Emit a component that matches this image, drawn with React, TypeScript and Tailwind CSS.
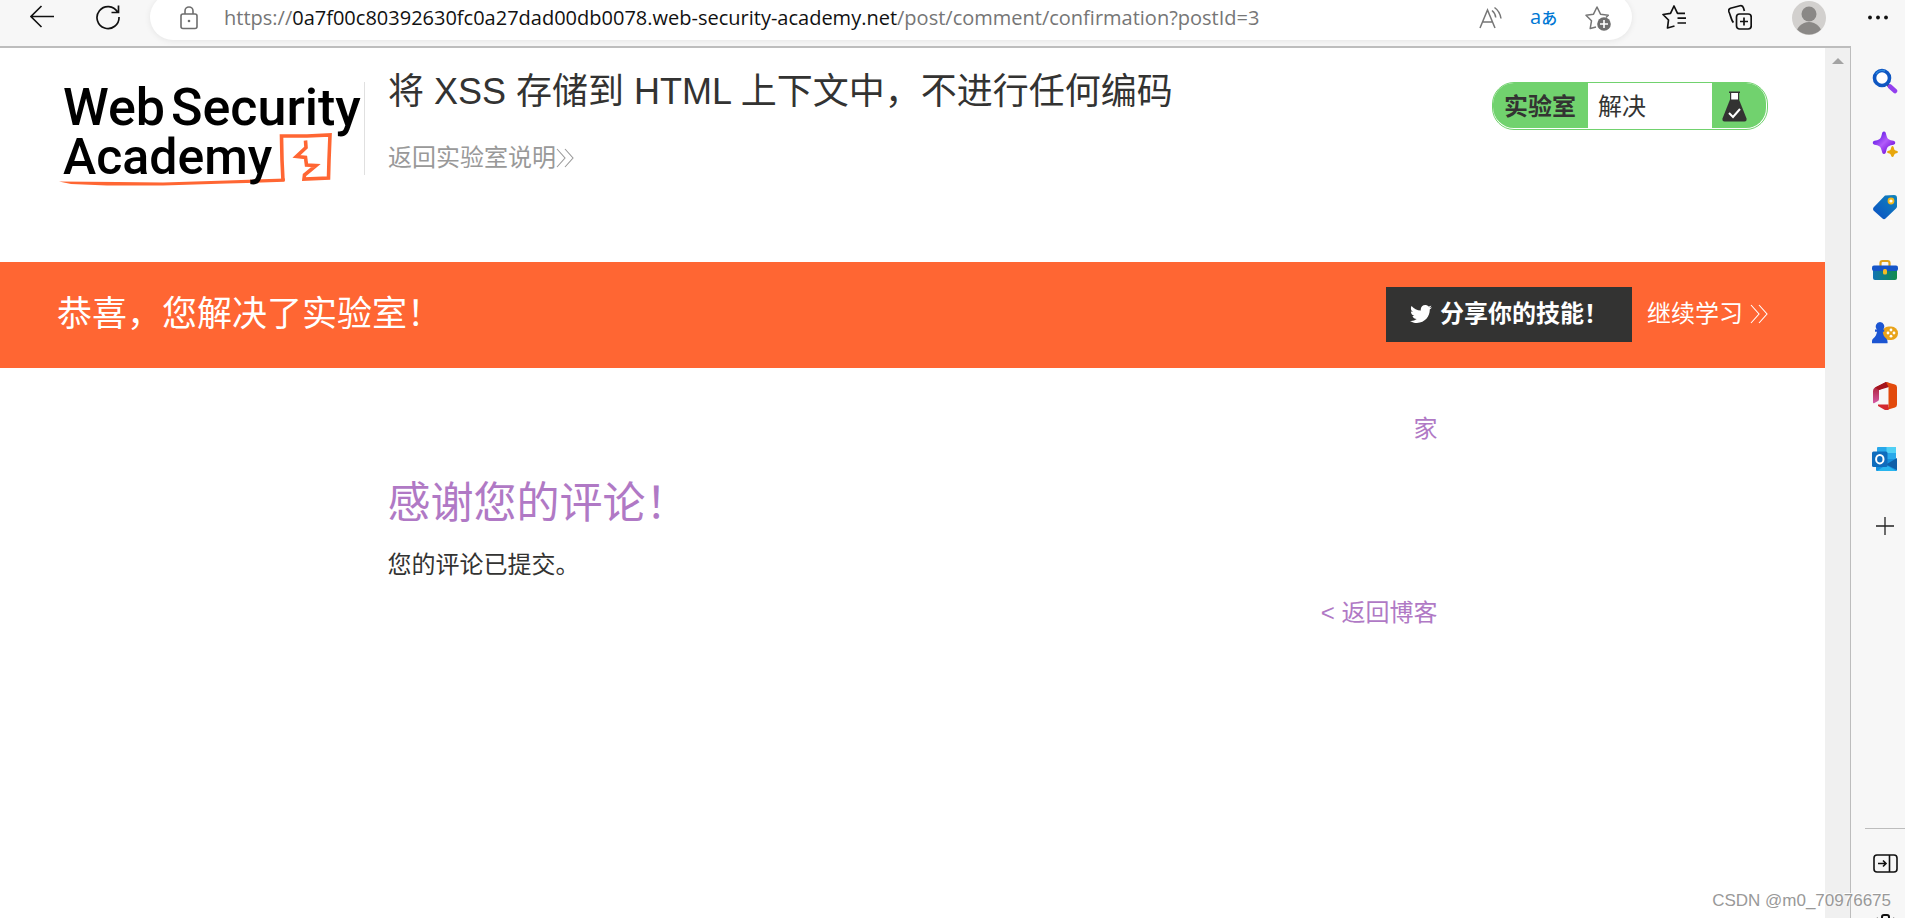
import React from 'react';
import { FaTwitter } from 'react-icons/fa';

const Toolbar = () => {
  return (
    <header className="flex h-[46px] shrink-0 items-start overflow-hidden bg-[#f7f7f7] pr-4 pl-[30px]">
      <button aria-label="后退" className="mt-1">
        <svg className="h-[26px] w-6" viewBox="0 0 24 26" fill="none" stroke="#111" strokeWidth="1.6">
          <path d="M24 12.5H1M11.5 2 1 12.5 11.5 23" />
        </svg>
      </button>
      <button aria-label="刷新" className="ml-[42px] mt-1">
        <svg className="h-[26px] w-6" viewBox="0 0 24 26" fill="none" stroke="#111" strokeWidth="1.7">
          <path d="M21.5 8A11 11 0 1 0 23 13M22.5 1.500V8.500H15.500" />
        </svg>
      </button>

      {/* Address bar */}
      <div className="-mt-1.5 ml-[30px] flex h-[46px] min-w-0 flex-1 items-center rounded-full bg-white pt-px pr-[21px] pl-[30px] shadow-[0_1px_6px_rgba(0,0,0,0.08)]">
        <svg className="h-6 w-[18px] shrink-0" viewBox="0 0 18 24" fill="none" stroke="#6e6e6e" strokeWidth="1.6">
          <rect x="1" y="8" width="16" height="14.500" rx="2" />
          <path d="M5 8V5a4 4 0 0 1 8 0v3" />
          <circle cx="9" cy="15" r="1.300" fill="#6e6e6e" stroke="none" />
        </svg>
        <div className="ml-[26px] min-w-0 flex-1 truncate font-['Open_Sans','Noto_Sans',sans-serif] text-[20px] leading-7 text-[#767676]">
          https://<span className="text-[#111]">0a7f00c80392630fc0a27dad00db0078.web-security-academy.net</span>/post/comment/confirmation?postId=3
        </div>
        <button aria-label="大声朗读">
          <svg className="h-[26px] w-6" viewBox="0 0 24 26" fill="none" stroke="#767676" strokeWidth="1.5">
            <path d="M1 23 8.500 5 16 23M3.700 17h9.600M13 5.500c2.200 1.800 3.500 4 3.700 7M15.500 2.500c3.800 2.700 5.800 6.200 6.500 11" />
          </svg>
        </button>
        <button aria-label="翻译" className="ml-[27px] w-[27px] whitespace-nowrap font-['Open_Sans','Noto_Sans_CJK_JP',sans-serif] leading-7 text-[#0078d4]">
          <span className="text-[20px]">a</span>
          <span className="text-[16px] font-medium">あ</span>
        </button>
        <button aria-label="添加到收藏夹" className="ml-7">
          <svg className="h-[26px] w-[26px]" viewBox="0 0 26 26" fill="none">
            <path
              d="M11 22 5.200 23.500 6.500 15.800 1 10.300 8.500 9.200 12 2l3.500 7.200 7.800 1.100-2.300 2.200"
              stroke="#767676"
              strokeWidth="1.5"
              strokeLinejoin="round"
            />
            <circle cx="19" cy="19" r="6.800" fill="#6e6e6e" />
            <path d="M19 15v8M15 19h8" stroke="#fff" strokeWidth="1.6" />
          </svg>
        </button>
      </div>

      <button aria-label="收藏夹" className="ml-[30px] mt-1">
        <svg className="h-[26px] w-6" viewBox="0 0 24 26" fill="none" stroke="#111" strokeWidth="1.7" strokeLinejoin="round">
          <path d="M12.500 22 5.500 24 6.500 16 1 10.500 8.500 9.400 12 2l3.500 7.400H23M15.500 14.200H24M15.500 19H24" />
        </svg>
      </button>
      <button aria-label="集锦" className="ml-[42px] mt-1">
        <svg className="h-[26px] w-6" viewBox="0 0 24 26" fill="none" stroke="#111" strokeWidth="1.7">
          <rect x="8.500" y="10" width="14.700" height="15" rx="3" />
          <path d="M16 13.500v8M12 17.500h8M5.500 18.500C3.500 17 2.800 12 1 8 .3 6 .9 4.800 2.500 4.200L12 1.700c2-.5 3 .5 3.500 2.200l.9 3" />
        </svg>
      </button>
      <button aria-label="个人资料" className="ml-10 mt-px">
        <svg className="h-[34px] w-[34px]" viewBox="0 0 34 34">
          <clipPath id="avatar">
            <circle cx="17" cy="17" r="16.500" />
          </clipPath>
          <circle cx="17" cy="17" r="17" fill="#d2d0ce" />
          <circle cx="17" cy="13" r="7.500" fill="#8a8886" />
          <circle cx="17" cy="34" r="13" fill="#8a8886" clipPath="url(#avatar)" />
        </svg>
      </button>
      <button aria-label="设置及其他" className="ml-[41px] mt-[5px]">
        <svg className="h-6 w-[22px]" viewBox="0 0 22 24" fill="#111">
          <circle cx="3" cy="12.500" r="1.900" />
          <circle cx="11" cy="12.500" r="1.900" />
          <circle cx="19" cy="12.500" r="1.900" />
        </svg>
      </button>
    </header>
  );
};

const AcademyLogo = () => (
  <svg
    className="h-[122px] w-[307px] shrink-0 font-['Roboto',sans-serif] font-medium"
    viewBox="0 -12 307 122"
    role="img"
    aria-label="Web Security Academy"
  >
    <path d="M2 101.500 60 102 106 102.500 170 100.500 228 98.500 227.500 101.800 170 103.500 106 105.500 50 105.500 14 104z" fill="#ff6633" />
    <path
      d="M226 101 225 80 224.500 56 250 56 273 55 272 80 271.500 98 247 99 247.500 95 259 85.500 249.500 85 248.500 77.500 239.500 76.500 249 67.500 248.500 60.500"
      fill="none"
      stroke="#ff6633"
      strokeWidth="3.6"
    />
    <g fill="#000">
      <text x="6" y="44.500" fontSize="52">Web</text>
      <text x="114" y="44.500" fontSize="52">Security</text>
      <text x="6" y="93.500" fontSize="50">Academy</text>
    </g>
  </svg>
);

const LabStatus = () => (
  <div className="mt-[14px] ml-auto flex h-12 w-[276px] shrink-0 rounded-[22px] border border-[#71d26e] pr-px pb-px text-[24px] leading-[47px] text-[#333332]">
    <span className="w-[95px] rounded-l-[21px] bg-[#71d26e] pl-[11px] font-bold">实验室</span>
    <span className="flex-1 pl-[10px]">解决</span>
    <span className="w-[54px] rounded-r-[20px] bg-[#71d26e] pt-2 pl-[9px]">
      <svg className="h-8 w-[26px]" viewBox="0 0 26 32">
        <path d="M9.500 2h8v7.500h-8z" fill="#fff" />
        <path d="M8 .5h11v1.600H8zM9 2h1.200v7H9zM17 2h1.200v7H17z" fill="#333332" />
        <path d="M9 8.500h9L25.500 27.500Q26 30.500 23.500 30.500H3.500Q1 30.500 1.500 27.500z" fill="#333332" />
        <path d="m8 22 4 4 7-8" fill="none" stroke="#fff" strokeWidth="2" />
      </svg>
    </span>
  </div>
);

const Chevrons = ({ className }: { className: string }) => (
  <svg className={className} viewBox="0 0 18 20" fill="none" stroke="currentColor" strokeWidth="1.1">
    <path d="m1 1 8 9-8 9M9 1l8 9-8 9" />
  </svg>
);

const Page = () => {
  return (
    <div className="min-w-0 flex-1 overflow-hidden bg-white text-[24px] leading-8 text-[#333332]">
      <div className="flex h-[214px] px-[57px] pt-5">
        <a href="#academy" className="shrink-0">
          <AcademyLogo />
        </a>
        <div className="mt-[14px] h-[93px] w-px shrink-0 bg-[#e0e0e0]" />
        <div className="ml-[23px]">
          <h2 className="text-[36px] leading-[48px]">将 XSS 存储到 HTML 上下文中，不进行任何编码</h2>
          <a href="#lab" className="mt-[26px] flex w-fit items-center text-[#999]">
            返回实验室说明
            <Chevrons className="h-5 w-[18px]" />
          </a>
        </div>
        <LabStatus />
      </div>

      {/* Solved banner */}
      <div className="flex h-[106px] items-center bg-[#ff6633] px-[57px] pb-0.5 text-white">
        <h4 className="text-[35px] leading-[44px]">恭喜，您解决了实验室！</h4>
        <button className="ml-auto flex h-[55px] w-[246px] items-center bg-[#333332] pl-6 font-bold">
          <FaTwitter className="mr-2 h-[22px] w-[22px]" />
          分享你的技能！
        </button>
        <a href="#continue" className="ml-[15px] flex items-center">
          继续学习
          <Chevrons className="ml-[7px] h-5 w-[18px]" />
        </a>
      </div>

      <main className="mx-auto max-w-[1050px] pt-[45px]">
        <div className="text-right">
          <a href="#home" className="text-[#b079c5]">家</a>
        </div>
        <h1 className="mt-7 text-[43px] leading-[60px] text-[#b079c5]">感谢您的评论！</h1>
        <p className="mt-4">您的评论已提交。</p>
        <div className="mt-4 text-right">
          <a href="#blog" className="text-[#b079c5]">&lt; 返回博客</a>
        </div>
      </main>
    </div>
  );
};

const SearchIcon = () => (
  <svg className="h-[26px] w-[26px]" viewBox="0 0 26 26" fill="none">
    <path d="m15.500 16.500 3 3" stroke="#555" strokeWidth="3" />
    <path d="m18 18.500 5 4.500" stroke="#9340ee" strokeWidth="4.500" strokeLinecap="round" />
    <circle cx="10" cy="10" r="7.500" fill="#fff" stroke="#0f57c2" strokeWidth="3.600" />
    <path d="M4 6a7.500 7.500 0 0 1 9-3" stroke="#2c8ae0" strokeWidth="1.500" />
  </svg>
);

const SparkleIcon = () => (
  <svg className="h-[26px] w-[26px]" viewBox="0 0 26 26">
    <defs>
      <linearGradient id="spark" x1="0" y1="0" x2="1" y2="1">
        <stop offset="0.2" stopColor="#6a22e8" />
        <stop offset="0.5" stopColor="#b25cfa" />
        <stop offset="0.8" stopColor="#7a1be0" />
      </linearGradient>
    </defs>
    <path d="M12 .5c1.500 0 1.800 1 2.200 3 .9 4 2 5.100 6 6 2 .4 3 .8 3 2.200s-1 1.800-3 2.200c-4 .9-5.100 2-6 6-.4 2-.8 3-2.200 3s-1.800-1-2.200-3c-.9-4-2-5.100-6-6-2-.4-3-.8-3-2.200s1-1.800 3-2.200c4-.9 5.100-2 6-6 .4-2 .8-3 2.200-3z" fill="url(#spark)" />
    <path d="M20.500 15c1.300 0 1.500 3.300 2.200 4 .6.600 3.300.8 3.300 2s-2.700 1.400-3.300 2c-.7.700-.9 3-2.200 3s-1.500-2.300-2.200-3c-.6-.6-3.300-.8-3.300-2s2.700-1.400 3.300-2c.7-.7.9-4 2.200-4z" fill="#e8a70c" />
  </svg>
);

const TagIcon = () => (
  <svg className="h-[26px] w-[26px]" viewBox="0 0 26 26">
    <defs>
      <linearGradient id="tag" x1="0" y1="1" x2="1" y2="0">
        <stop offset="0" stopColor="#0b4fc4" />
        <stop offset="1" stopColor="#1185bb" />
      </linearGradient>
    </defs>
    <path d="M13 1.500 22 1q3 0 3 3v8.500q0 1-1 2L13.500 24.500Q12 26 10.500 24.500L1.500 16.500Q.5 15 1.500 13.500z" fill="url(#tag)" />
    <circle cx="19" cy="7" r="2.500" fill="#fff" stroke="#f4b91b" strokeWidth="1.800" />
  </svg>
);

const ToolboxIcon = () => (
  <svg className="h-[26px] w-[26px]" viewBox="0 0 26 26">
    <defs>
      <linearGradient id="box" x1="0" y1="0" x2="1" y2="0">
        <stop offset="0" stopColor="#1173b5" />
        <stop offset="1" stopColor="#128c4b" />
      </linearGradient>
    </defs>
    <path d="M8.500 9V6q0-2 2-2h5q2 0 2 2v3" fill="none" stroke="#e0a21a" strokeWidth="2.200" />
    <path d="M1 11h24v10q0 2-2 2H3q-2 0-2-2z" fill="url(#box)" />
    <path d="M2 8.500h22q2 0 2 2V12q0 2-2 2H2q-2 0-2-2v-1.500q0-2 2-2z" fill="#1555c8" />
    <rect x="11" y="12" width="4" height="5.500" rx="1.500" fill="#f7bb24" />
  </svg>
);

const GamesIcon = () => (
  <svg className="h-[26px] w-[26px]" viewBox="0 0 26 26">
    <rect x="10" y="6.500" width="16" height="13.500" rx="6.700" fill="#e9a31a" />
    <g fill="#fff">
      <circle cx="19" cy="10" r="1.400" />
      <circle cx="16" cy="13" r="1.400" />
      <circle cx="22" cy="13" r="1.400" />
      <circle cx="19" cy="16.200" r="1.400" />
    </g>
    <path d="M8 2a4.500 4.500 0 0 1 3 7.600h1.200v2.200h-1.400c.2 3 1.200 5 3.200 6.500q2 1.400 1.500 5H0q-.5-3.600 1.500-5c2-1.500 3-3.500 3.500-6.500H3V9.600h2A4.500 4.500 0 0 1 8 2z" fill="#1c55d2" />
  </svg>
);

const OfficeIcon = () => (
  <svg className="h-[30px] w-[26px]" viewBox="0 0 26 30">
    <defs>
      <linearGradient id="office" x1="0" y1="0" x2="0" y2="1">
        <stop offset="0" stopColor="#a5141c" />
        <stop offset="1" stopColor="#d459a5" />
      </linearGradient>
    </defs>
    <path d="M14 1 3 6.500Q1 7.600 1 10v11.500q0 1 1 .7l4-2.200q1-.6 1-2V9l9-4z" fill="url(#office)" />
    <path d="M3 6.500 14 1l3 1v4L7 9z" fill="#a5141c" />
    <path d="M14 1 23 3.500q2 .7 2 3v17q0 2.300-2 3L14.500 29l2-3V6z" fill="#e24a0c" />
    <path d="M6 23.500h10.500V29h-2q-1 .3-2-.2L6 25z" fill="#d3292f" />
  </svg>
);

const OutlookIcon = () => (
  <svg className="h-[26px] w-[26px]" viewBox="0 0 26 26">
    <path d="M6 1h17q1 0 1 1v11H5V2q0-1 1-1z" fill="#28a8ea" />
    <path d="M14.500 1H24v6h-9.500z" fill="#50d0f5" />
    <path d="M4 13h21v11q0 1-1 1H5q-1 0-1-1z" fill="#1490df" />
    <path d="M25 12 14 18.500 25 24z" fill="#0f5fa8" />
    <path d="m14 19 10.500 6H5z" fill="#28b5ee" />
    <rect x="0" y="5.500" width="15.500" height="15.500" rx="1.500" fill="#0f6cbd" />
    <ellipse cx="7.800" cy="13.200" rx="3.700" ry="4.200" fill="none" stroke="#fff" strokeWidth="2" />
  </svg>
);

const apps = [
  { name: '搜索', icon: SearchIcon },
  { name: '发现', icon: SparkleIcon },
  { name: '购物', icon: TagIcon },
  { name: '工具', icon: ToolboxIcon },
  { name: '游戏', icon: GamesIcon },
  { name: 'Office', icon: OfficeIcon },
  { name: 'Outlook', icon: OutlookIcon }
];

const Sidebar = () => {
  return (
    <aside className="flex w-[54px] shrink-0 flex-col overflow-hidden bg-[#f7f7f7] pt-[3px]">
      {apps.map((app) => (
        <button key={app.name} aria-label={app.name} className="flex h-[63px] shrink-0 items-center justify-center pl-[14px]">
          <app.icon />
        </button>
      ))}
      <button aria-label="自定义" className="mt-1 flex h-[63px] shrink-0 items-center justify-center pl-[14px]">
        <svg className="h-[18px] w-[18px]" viewBox="0 0 18 18" stroke="#222" strokeWidth="1.3">
          <path d="M9 0v18M0 9h18" />
        </svg>
      </button>
      <div className="mt-auto ml-[14px] h-[90px] shrink-0 border-t border-[#bdbdbd] pt-[25px]">
        <button aria-label="隐藏边栏" className="ml-2 block">
          <svg className="h-[19px] w-[25px]" viewBox="0 0 25 19" fill="none" stroke="#111" strokeWidth="1.6">
            <rect x="1" y="1" width="23" height="17" rx="3" />
            <path d="M16.500 1v17M5 9.500h8M10 6.500l3 3-3 3" />
          </svg>
        </button>
        <button aria-label="边栏设置" className="mt-[41px] ml-2 block">
          <svg className="h-6 w-[25px]" viewBox="0 0 25 24" fill="none" stroke="#111" strokeWidth="2">
            <path d="M9 6V3q0-2 2-2h3q2 0 2 2v3M2 5.500l3-1M23 5.500l-3-1" />
          </svg>
        </button>
      </div>
    </aside>
  );
};

const App = () => {
  return (
    <div className="relative flex h-screen flex-col overflow-hidden bg-[#f7f7f7] font-['Liberation_Sans','Noto_Sans_CJK_SC',sans-serif]">
      <Toolbar />
      <div className="flex min-h-0 flex-1">
        <div className="flex min-w-0 flex-1 border-t-2 border-r border-[#bdbdbd]">
          <Page />
          <div className="w-[25px] shrink-0 bg-[#f0f0f0] pt-[10px]">
            <svg className="mx-auto h-[6px] w-3" viewBox="0 0 12 6">
              <path d="M6 0l6 6H0z" fill="#a3a3a3" />
            </svg>
          </div>
        </div>
        <Sidebar />
      </div>
      <span className="absolute right-[14px] bottom-[5px] text-[17px] leading-6 text-[#999] [text-shadow:-1px_-1px_0_#fff]">
        CSDN @m0_70976675
      </span>
    </div>
  );
};

export default App;
